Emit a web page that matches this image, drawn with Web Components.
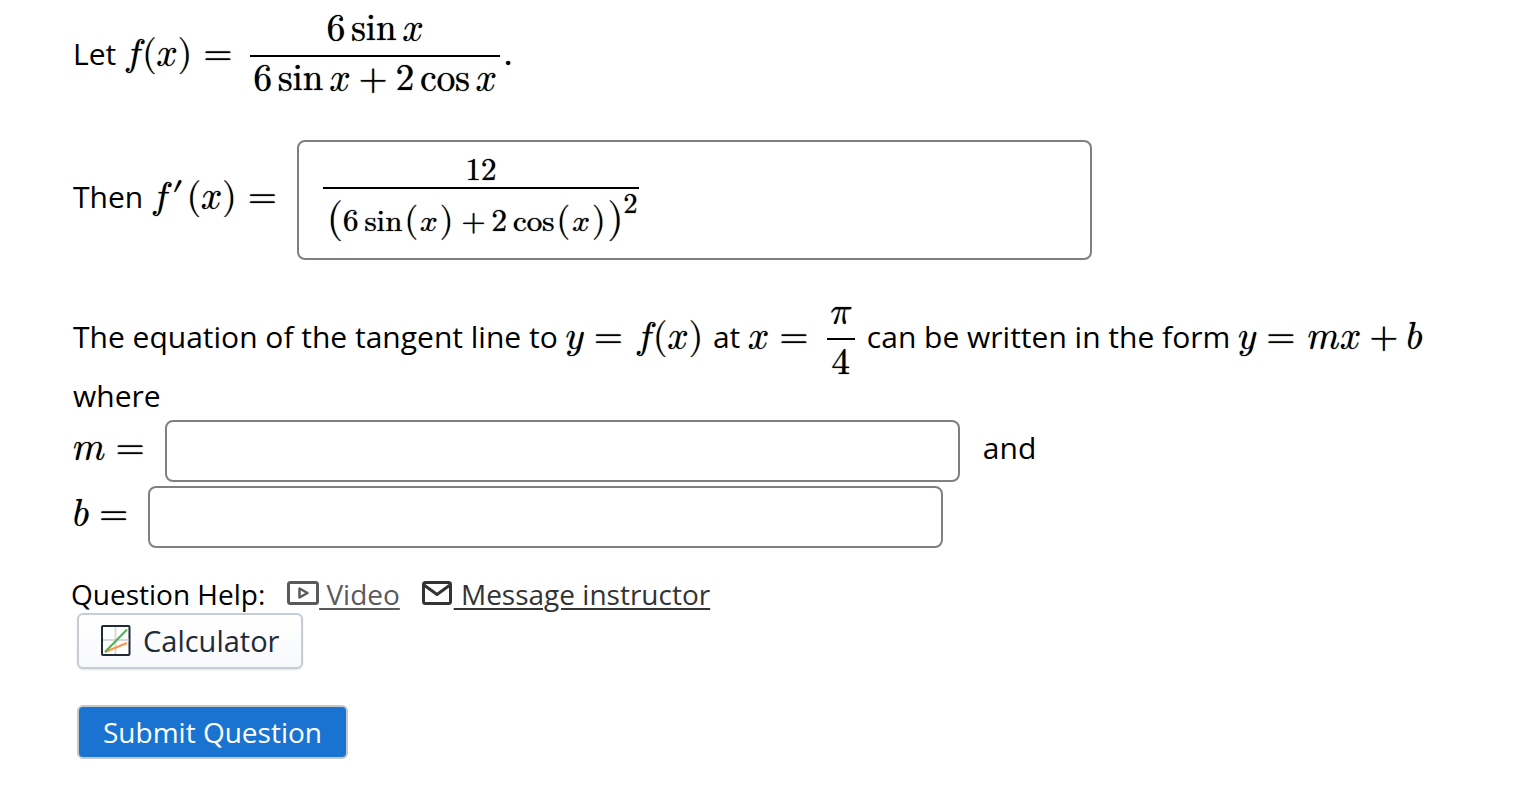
<!DOCTYPE html>
<html lang="en">
<head>
<meta charset="utf-8">
<meta name="viewport" content="width=device-width, initial-scale=1">
<title>Question</title>
<style>
  body {
    margin: 0;
    background: #fff;
    color: #000;
    font-family: "Open Sans", "Liberation Sans", sans-serif;
  }
</style>
</head>
<body>

<template id="math-expr">
  <style>
    :host { display: inline; }
    ::slotted(math) {
      font-family: "Latin Modern Math", "Liberation Serif", serif;
      font-size: var(--math-size, 37px);
      text-shadow: 0 0 1px currentColor;
    }
  </style><slot></slot></template>

<template id="question-line">
  <style>
    :host { display: block; font-size: 30px; line-height: 44px; }
  </style>
  <slot></slot>
</template>

<template id="answer-field">
  <style>
    :host { display: block; font-size: 30px; line-height: 44px; }
    input, .filled {
      box-sizing: border-box;
      width: 795px;
      max-width: 100%;
      height: 62px;
      margin: 2px 10px;
      padding: 0 23px;
      border: 2px solid #808080;
      border-radius: 8px;
      background: #fff;
      font: inherit;
      vertical-align: middle;
    }
    .filled {
      --math-size: 31px;
      display: inline-flex;
      align-items: center;
      height: 120px;
      line-height: 40px;
    }
    .after { padding-left: 13px; }
    [hidden] { display: none; }
  </style>
  <label for="box" id="name"><slot name="label"></slot></label><input id="box" type="text" autocomplete="off"><div class="filled" role="textbox" tabindex="0" aria-labelledby="name" hidden><slot name="value"></slot></div><span class="after"><slot></slot></span>
</template>

<template id="help-link">
  <style>
    :host { display: inline; }
    a { color: var(--link, #333); text-decoration: underline; text-decoration-thickness: 2px; text-underline-offset: 3px; }
    ::slotted(svg) { vertical-align: -1px; }
  </style>
  <a href="#"><slot name="icon"></slot><slot></slot></a>
</template>

<template id="tool-button">
  <style>
    :host { display: block; }
    button {
      display: inline-flex;
      align-items: center;
      gap: 12px;
      height: 56px;
      padding: 0 22px;
      border: 2px solid #c5cdd6;
      border-radius: 6px;
      background: linear-gradient(#fff, #f8f9fb);
      box-shadow: 0 1px 2px rgba(0, 0, 0, .12);
      color: #1f2a37;
      font: inherit;
      font-size: 29px;
    }
    :host([primary]) button {
      height: 54px;
      padding: 0 24px;
      border-color: #c8c8c8;
      background: #1a73d1;
      box-shadow: none;
      color: #fff;
      font-size: 28px;
    }
  </style>
  <button type="button"><slot></slot></button>
</template>

<template id="question-page">
  <style>
    :host { display: block; padding: 0 70px 44px; }
    .question { padding: 0 3px; }
    .help { margin-top: 25px; padding: 0 1px; font-size: 28px; line-height: 38px; }
    .tools { padding: 0 7px; }
    .actions { padding: 36px 7px 0; }
  </style>
  <div class="question"><slot></slot></div>
  <div class="help"><slot name="help"></slot></div>
  <div class="tools"><slot name="tools"></slot></div>
  <div class="actions"><slot name="actions"></slot></div>
</template>

<script>
function define(name, setup) {
  customElements.define(name, class extends HTMLElement {
    constructor() {
      super();
      const root = this.attachShadow({ mode: 'open' });
      root.appendChild(document.getElementById(name).content.cloneNode(true));
      if (setup) setup(this, root);
    }
  });
}

window.addEventListener('DOMContentLoaded', () => {
  define('math-expr');
  define('question-line');
  define('answer-field', (host, root) => {
    // a field that already holds a typeset answer shows it in place of the input
    const filled = host.querySelector('[slot=value]') !== null;
    root.querySelector('input').hidden = filled;
    root.querySelector('.filled').hidden = !filled;
  });
  define('help-link', (host, root) => {
    root.querySelector('a').addEventListener('click', (e) => e.preventDefault());
  });
  define('tool-button');
  define('question-page');
});
</script>

<style>
  question-line.first { padding-top: 15px; }
  answer-field.derivative { margin: 44px 0 45px; }
</style>

<question-page>
  <question-line class="first">Let <math-expr><math displaystyle="true"><mi>f</mi><mo stretchy="false">(</mo><mi>x</mi><mo stretchy="false">)</mo><mspace width="1px"></mspace><mo>=</mo><mspace width="7px"></mspace><mfrac linethickness="2px"><mrow><mn>6</mn><mspace width="6px"></mspace><mi>sin</mi><mspace width="6px"></mspace><mi>x</mi></mrow><mrow><mspace width="3px"></mspace><mn>6</mn><mspace width="6px"></mspace><mi>sin</mi><mspace width="6px"></mspace><mi>x</mi><mo>+</mo><mn>2</mn><mspace width="6px"></mspace><mi>cos</mi><mspace width="6px"></mspace><mi>x</mi><mspace width="3px"></mspace></mrow></mfrac><mspace width="2px"></mspace><mtext>.</mtext></math></math-expr></question-line>

  <answer-field class="derivative">
    <span slot="label">Then <math-expr><math><mi>f</mi><mspace width="3px"></mspace><mo lspace="0px" rspace="3px">′</mo><mo stretchy="false">(</mo><mi>x</mi><mo stretchy="false">)</mo><mspace width="1px"></mspace><mo>=</mo></math></math-expr></span>
    <math-expr slot="value"><math><mfrac linethickness="2px"><mrow scriptlevel="0"><mn>12</mn><mspace depth="6px"></mspace></mrow><mrow scriptlevel="0"><mspace width="4px" height="41px"></mspace><mo stretchy="false" mathsize="41px" lspace="0px" rspace="0px">(</mo><mn>6</mn><mspace width="6px"></mspace><mi>sin</mi><mo stretchy="false" mathsize="35px" lspace="2px" rspace="2px">(</mo><mi>x</mi><mo stretchy="false" mathsize="35px" lspace="2px" rspace="2px">)</mo><mo lspace="6px" rspace="6px">+</mo><mn>2</mn><mspace width="6px"></mspace><mi>cos</mi><mo stretchy="false" mathsize="35px" lspace="2px" rspace="2px">(</mo><mi>x</mi><mo stretchy="false" mathsize="35px" lspace="2px" rspace="2px">)</mo><mo stretchy="false" mathsize="41px" lspace="0px" rspace="0px">)</mo><msup><mspace height="26px"></mspace><mn mathsize="28px">2</mn></msup></mrow></mfrac></math></math-expr>
  </answer-field>

  <question-line>The equation of the tangent line to <math-expr><math><mi>y</mi><mo>=</mo><mspace width="2px"></mspace><mi>f</mi><mo stretchy="false">(</mo><mi>x</mi><mo stretchy="false">)</mo><mspace width="2px"></mspace></math></math-expr> at <math-expr><math displaystyle="true"><mi>x</mi><mo>=</mo><mspace width="7px"></mspace><mfrac linethickness="2px"><mi>π</mi><mrow><mspace width="5px"></mspace><mn>4</mn><mspace width="5px"></mspace></mrow></mfrac><mspace width="3px"></mspace></math></math-expr> can be written in the form <math-expr><math><mi>y</mi><mo>=</mo><mspace width="2px"></mspace><mi>m</mi><mi>x</mi><mo>+</mo><mi>b</mi></math></math-expr> where</question-line>

  <answer-field><math-expr slot="label"><math><mi>m</mi><mo>=</mo></math></math-expr>and</answer-field>
  <answer-field><math-expr slot="label"><math><mi>b</mi><mo>=</mo></math></math-expr></answer-field>

  <span slot="help">Question Help: &nbsp;
    <help-link style="--link: #5a5a5a"><svg slot="icon" width="32" height="26" viewBox="0 0 32 26" fill="none" stroke="#5a5a5a" stroke-width="3" stroke-linejoin="round"><rect x="1.5" y="2.5" width="29" height="21" rx="2"/><path d="M12.5 8.5v9l8-4.500z" stroke-width="2.500"/></svg> Video</help-link>
    &nbsp;<help-link><svg slot="icon" width="32" height="26" viewBox="0 0 32 26" fill="none" stroke="#333" stroke-width="3" stroke-linejoin="round"><rect x="1.500" y="2.500" width="27" height="21" rx="2"/><path d="M2 5l13 9.500L28 5"/></svg> Message instructor</help-link></span>

  <tool-button slot="tools"><svg width="30" height="32" viewBox="0 0 30 32" fill="none"><rect x="1" y="1" width="27.500" height="29" rx="1" fill="#fff" stroke="#1f2a37" stroke-width="2"/><path d="M14.500 2v27M2 15h25.500" stroke="#d9d9d9" stroke-width="2"/><path d="M4 27L26 18" stroke="#ff9447" stroke-width="2"/><path d="M4 27L26 4.500" stroke="#45b649" stroke-width="2"/></svg>Calculator</tool-button>

  <tool-button slot="actions" primary>Submit Question</tool-button>
</question-page>

</body>
</html>
